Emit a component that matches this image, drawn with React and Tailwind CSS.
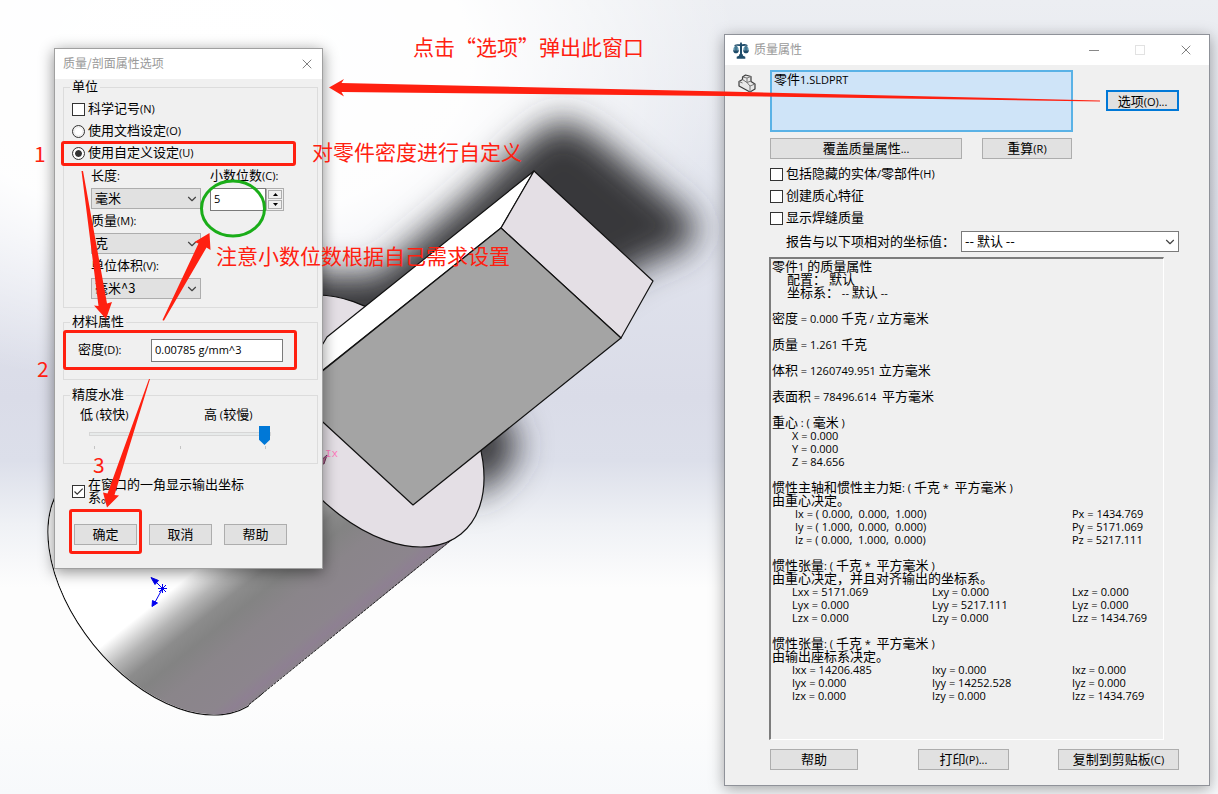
import React, { useState } from "react";
import { ChevronDown, X } from "lucide-react";

// Latin runs are set smaller than the Chinese text around them
function T({ children }) {
  const parts = children.split(/([\x20-\x7e]+)/).filter((part) => part !== "");
  return parts.map((part, i) =>
    /^[\x20-\x7e]+$/.test(part) ? (
      <span
        key={i}
        className="whitespace-pre font-['Open_Sans','Noto_Sans',sans-serif] text-[11px] leading-[0]"
      >
        {part}
      </span>
    ) : (
      <React.Fragment key={i}>{part}</React.Fragment>
    )
  );
}

function Button({ className, children }) {
  return (
    <button
      type="button"
      className={`h-[21px] pb-[2px] leading-[17px] text-center ${className}`}
    >
      <T>{children}</T>
    </button>
  );
}

function Checkbox({ label, defaultChecked = false, className = "h-[22px]" }) {
  const [checked, setChecked] = useState(defaultChecked);
  return (
    <label className={`flex items-center gap-[3px] ${className}`}>
      <span className="relative size-[13px] shrink-0">
        <input
          type="checkbox"
          checked={checked}
          onChange={(e) => setChecked(e.target.checked)}
          className="block size-[13px] appearance-none border border-[#333] bg-white"
        />
        {checked && (
          <svg
            viewBox="0 0 13 13"
            className="pointer-events-none absolute inset-0"
            fill="none"
            stroke="#333"
            strokeWidth="1.2"
          >
            <path d="M2.5 6.5 5.2 9.2 10.7 3.7" />
          </svg>
        )}
      </span>
      <span className="pb-[2px]">
        <T>{label}</T>
      </span>
    </label>
  );
}

function Radio({ label, value, selected, onSelect }) {
  return (
    <label className="flex h-[22px] items-center gap-[3px]">
      <input
        type="radio"
        name="units"
        value={value}
        checked={selected === value}
        onChange={() => onSelect(value)}
        className="size-[13px] shrink-0 appearance-none rounded-full border border-[#333] bg-white bg-clip-content p-[2px] checked:bg-[#333] checked:shadow-[inset_0_0_0_2px_#fff]"
      />
      <span className="pb-[2px]">
        <T>{label}</T>
      </span>
    </label>
  );
}

function Select({ id, options, className }) {
  return (
    <div className={`relative h-[21px] ${className}`}>
      <select
        id={id}
        className="block size-full appearance-none pr-5 pb-[2px] pl-[3px] leading-[17px]"
      >
        {options.map((option) => (
          <option key={option}>{option}</option>
        ))}
      </select>
      <ChevronDown
        size={14}
        strokeWidth={2}
        className="pointer-events-none absolute top-[3px] right-px text-[#444]"
      />
    </div>
  );
}

function Group({ title, className, children }) {
  return (
    <fieldset className={`min-w-0 border border-[#dcdcdc] px-2 ${className}`}>
      <legend className="-ml-[2px] h-[14px] px-[2px] leading-[12px]">
        {title}
      </legend>
      {children}
    </fieldset>
  );
}

function ScaleIcon() {
  return (
    <svg width="16" height="17" viewBox="0 0 16 17" fill="#1f4c69">
      <path d="M7 1.200 8 0l1 1.200V13h-2z" />
      <path d="M1.500 3C4 1.400 6 2.600 8 2.300S12 1.400 14.500 3v1.300C12 3.300 10 4.400 8 4.200S4 3.300 1.500 4.300z" />
      <path
        d="M.3 8.300C.3 5.500 1.400 4 3 4s2.700 1.500 2.700 4.300z M10.300 8.300C10.300 5.500 11.400 4 13 4s2.700 1.500 2.700 4.300z"
        fill="#5d93ab"
      />
      <path d="M2.600 4h.8v5h-.8z M12.600 4h.8v5h-.8z" />
      <path d="M0 8.200h6C5.600 10.700 4.400 11.200 3 11.200S.4 10.700 0 8.200z M10 8.200h6c-.4 2.500-1.600 3-3 3s-2.600-.5-3-3z" />
      <path d="M6.500 12h3l.6 1.800 2.200.9v2H3.700v-2l2.200-.9z" />
    </svg>
  );
}

function PartIcon() {
  return (
    <svg
      width="18"
      height="19"
      viewBox="0 0 18 19"
      fill="#e8e8e8"
      stroke="#3c3c3c"
      strokeWidth="1.200"
      strokeLinejoin="round"
    >
      <path d="M1 7.500 4.500 5.500V3L7.500 1 13 2.500V7.500L17 10V15L12 18 1 12z" />
      <path
        d="M4.500 5.500 9 8.500V4L4.500 3M9 4l4-1.500M9 8.500l4-1.500M9 8.500 12 12l5-2M12 12v6M1 7.500 4.500 9"
        fill="none"
        stroke="#777"
        strokeWidth="1"
      />
    </svg>
  );
}

function Scene() {
  return (
    <svg
      width="1218"
      height="794"
      viewBox="0 0 1218 794"
      className="absolute top-0 left-0"
      aria-hidden="true"
    >
      <defs>
        <linearGradient id="sky" x1="0" y1="0" x2="0" y2="1">
          <stop offset="0" stopColor="#eceef2" />
          <stop offset="0.25" stopColor="#e2e5ee" />
          <stop offset="0.5" stopColor="#dadce8" />
          <stop offset="0.58" stopColor="#dcdfea" />
          <stop offset="0.66" stopColor="#eff1f5" />
          <stop offset="0.74" stopColor="#fdfdfd" />
          <stop offset="0.88" stopColor="#fdfdfd" />
          <stop offset="1" stopColor="#f7f9fb" />
        </linearGradient>
        <radialGradient
          id="glow"
          gradientUnits="userSpaceOnUse"
          cx="0"
          cy="0"
          r="1"
          gradientTransform="translate(200 60) scale(540 330)"
        >
          <stop offset="0" stopColor="#fff" />
          <stop offset="0.5" stopColor="#fff" stopOpacity="0.95" />
          <stop offset="1" stopColor="#fff" stopOpacity="0" />
        </radialGradient>
        <linearGradient
          id="shaft"
          gradientUnits="userSpaceOnUse"
          x1="350"
          y1="431"
          x2="444"
          y2="548"
        >
          <stop offset="0" stopColor="#fff" />
          <stop offset="0.08" stopColor="#fff" />
          <stop offset="0.24" stopColor="#b4b4b4" />
          <stop offset="0.36" stopColor="#8c8c8c" />
          <stop offset="0.47" stopColor="#838383" />
          <stop offset="0.63" stopColor="#8a858a" />
          <stop offset="0.88" stopColor="#8c858d" />
          <stop offset="0.95" stopColor="#8e8092" />
          <stop offset="1" stopColor="#8b838c" />
        </linearGradient>
        <filter id="soft" x="-20%" y="-20%" width="140%" height="140%">
          <feGaussianBlur stdDeviation="17" />
        </filter>
        <clipPath id="aboveEdge">
          <path d="M0 300H748L249 705 240 794H0z" />
        </clipPath>
      </defs>

      <rect width="1218" height="794" fill="url(#sky)" />
      <rect width="1218" height="794" fill="url(#glow)" />

      <g fill="#37383a" filter="url(#soft)">
        <path d="M280 272 375 276 465 200 528 140 560 118 592 134 698 222 690 246 640 266 440 400 300 400z" />
        <path d="M440 400 500 412 518 440 510 468 470 500z" />
      </g>

      {/* cylinder */}
      <g clipPath="url(#aboveEdge)">
        <ellipse
          cx="162.500"
          cy="589"
          rx="145.400"
          ry="88.600"
          transform="rotate(51 162.500 589)"
          fill="#fff"
          stroke="#111"
          strokeWidth="1.200"
        />
        <clipPath id="cap">
          <ellipse
            cx="162.500"
            cy="589"
            rx="144.800"
            ry="88"
            transform="rotate(51 162.500 589)"
          />
        </clipPath>
        <rect
          y="440"
          width="340"
          height="290"
          fill="url(#shaft)"
          clipPath="url(#cap)"
        />
      </g>
      <path d="M77 473 284 305 456 537 249 704z" fill="url(#shaft)" />
      <path
        d="M249 704.500 460 533"
        stroke="#222"
        strokeWidth="1"
        strokeDasharray="3 1"
      />
      <ellipse
        cx="369.500"
        cy="421"
        rx="145.400"
        ry="88.600"
        transform="rotate(51 369.500 421)"
        fill="#e4dfe5"
        stroke="#111"
        strokeWidth="1.200"
      />

      {/* block */}
      <g stroke="#111" strokeWidth="1.200" strokeLinejoin="round">
        <path d="M534 171 327 337 318 352V374L501 228z" fill="#fff" />
        <path d="M534 171 653 281 621 338 501 228z" fill="#e4dfe5" />
        <path d="M501 228 621 338 413 505 300 401V389z" fill="#a4a4a4" />
      </g>

      <path d="M318 463 327 455 324 464z" fill="#b06a90" stroke="#733b5b" />
      <text
        x="325"
        y="457"
        fill="#ff7bbd"
        className="font-['Liberation_Mono',monospace] text-[11px]"
      >
        Ix
      </text>

      {/* origin triad */}
      <g stroke="#0000f0" fill="#0000f0" strokeWidth="1">
        <path d="M162.500 588.500 153 579M162.500 588.500 154 604" />
        <path d="M158 588.500h9M162.500 584v9M159 585l7 7M159 592l7-7" />
        <path d="M151 577.500 158.500 580.500 155 584.500z M152 606.500 152.500 600.500 157.500 603z" />
      </g>
    </svg>
  );
}

function OptionsWindow() {
  const [units, setUnits] = useState("custom");
  const select = "border border-[#adadad] bg-[#e1e1e1]";

  return (
    <section className="absolute top-12 left-[54px] w-[269px] border border-[#a0a0a0] bg-[#f0f0f0] shadow-[0_3px_14px_rgba(0,0,0,0.45)]">
      <header className="flex h-[30px] items-center justify-between bg-white pr-[7px] pl-2 text-xs text-[#999]">
        <h2 className="pb-[2px]">质量/剖面属性选项</h2>
        <button type="button" aria-label="关闭" className="text-[#808080]">
          <X size={16} strokeWidth={1.5} />
        </button>
      </header>

      <form className="px-[8px] pt-px pb-[23px]">
        <Group title="单位" className="mr-[-4px] pt-1 pb-2">
          <Checkbox label="科学记号(N)" />
          <Radio
            label="使用文档设定(O)"
            value="doc"
            selected={units}
            onSelect={setUnits}
          />
          <Radio
            label="使用自定义设定(U)"
            value="custom"
            selected={units}
            onSelect={setUnits}
          />
          <div className="mt-[2px] ml-[19px] flex items-start gap-[9px]">
            <div className="flex w-[110px] flex-col gap-[2px]">
              <label htmlFor="length" className="h-5 leading-[17px]">
                <T>长度:</T>
              </label>
              <Select id="length" options={["毫米", "厘米", "米"]} className={select} />
              <label htmlFor="mass" className="h-5 leading-[17px]">
                <T>质量(M):</T>
              </label>
              <Select id="mass" options={["克", "千克"]} className={select} />
              <label htmlFor="volume" className="h-5 leading-[17px]">
                <T>单位体积(V):</T>
              </label>
              <Select id="volume" options={["毫米^3", "厘米^3"]} className={select} />
            </div>
            <div className="flex flex-col gap-[2px]">
              <label htmlFor="decimals" className="h-5 leading-[17px]">
                <T>小数位数(C):</T>
              </label>
              <div className="flex h-[23px] w-[74px]">
                <input
                  id="decimals"
                  type="text"
                  defaultValue="5"
                  className="w-0 grow border border-[#7a7a7a] bg-white pb-[2px] pl-[3px] font-['Open_Sans',sans-serif] text-[11px]"
                />
                <div className="flex w-[18px] flex-col gap-px border border-[#adadad] p-px">
                  <button
                    type="button"
                    aria-label="增加"
                    className="flex grow items-center justify-center border border-[#adadad]"
                  >
                    <svg width="5" height="3" viewBox="0 0 5 3">
                      <path d="M0 3 2.500 0 5 3z" />
                    </svg>
                  </button>
                  <button
                    type="button"
                    aria-label="减少"
                    className="flex grow items-center justify-center border border-[#adadad]"
                  >
                    <svg width="5" height="3" viewBox="0 0 5 3">
                      <path d="M0 0H5L2.500 3z" />
                    </svg>
                  </button>
                </div>
              </div>
            </div>
          </div>
        </Group>

        <Group title="材料属性" className="mt-[7px] mr-[-4px] pt-[10px] pb-[17px]">
          <div className="ml-[6px] flex h-[23px] items-center">
            <label htmlFor="density" className="w-[73px] pb-1">
              <T>密度(D):</T>
            </label>
            <input
              id="density"
              type="text"
              defaultValue="0.00785 g/mm^3"
              className="h-full w-[132px] border border-[#7a7a7a] bg-white pb-[2px] pl-[3px] font-['Open_Sans',sans-serif] text-[11px]"
            />
          </div>
        </Group>

        <Group title="精度水准" className="mt-2 mr-[-4px] pt-[3px] pb-[14px]">
          <div className="flex h-5 items-center pb-[2px] pl-2">
            <label htmlFor="accuracy" className="w-[124px]">
              <T>低 (较快)</T>
            </label>
            <span>
              <T>高 (较慢)</T>
            </span>
          </div>
          <input
            id="accuracy"
            type="range"
            min="0"
            max="2"
            defaultValue="2"
            className="mt-px ml-[17px] block h-4 w-[182px] appearance-none bg-transparent [&::-webkit-slider-runnable-track]:h-1 [&::-webkit-slider-runnable-track]:border [&::-webkit-slider-runnable-track]:border-[#d6d6d6] [&::-webkit-slider-runnable-track]:bg-[#e7eaea] [&::-webkit-slider-thumb]:-mt-[7px] [&::-webkit-slider-thumb]:h-[19px] [&::-webkit-slider-thumb]:w-[11px] [&::-webkit-slider-thumb]:appearance-none [&::-webkit-slider-thumb]:bg-[#0078d7] [&::-webkit-slider-thumb]:[clip-path:polygon(0_0,100%_0,100%_72%,50%_100%,0_72%)]"
          />
          <div className="mt-1 ml-[22px] flex w-[172px] justify-between">
            <i className="h-[3px] w-px bg-[#c4c4c4]" />
            <i className="h-[3px] w-px bg-[#c4c4c4]" />
            <i className="h-[3px] w-px bg-[#c4c4c4]" />
          </div>
        </Group>

        <Checkbox
          label="在窗口的一角显示输出坐标系。"
          defaultChecked
          className="mt-[13px] ml-[9px] w-[180px] leading-[13px]"
        />

        <div className="mt-[19px] ml-[11px] flex gap-3">
          <Button className="w-[63px] border border-[#adadad] bg-[#e1e1e1]">确定</Button>
          <Button className="w-[63px] border border-[#adadad] bg-[#e1e1e1]">取消</Button>
          <Button className="w-[63px] border border-[#adadad] bg-[#e1e1e1]">帮助</Button>
        </div>
      </form>
    </section>
  );
}

const principal = [
  ["Ix = ( 0.000,  0.000,  1.000)", "Px = 1434.769"],
  ["Iy = ( 1.000,  0.000,  0.000)", "Py = 5171.069"],
  ["Iz = ( 0.000,  1.000,  0.000)", "Pz = 5217.111"],
];

const inertiaAtCentroid = [
  ["Lxx = 5171.069", "Lxy = 0.000", "Lxz = 0.000"],
  ["Lyx = 0.000", "Lyy = 5217.111", "Lyz = 0.000"],
  ["Lzx = 0.000", "Lzy = 0.000", "Lzz = 1434.769"],
];

const inertiaAtOutput = [
  ["Ixx = 14206.485", "Ixy = 0.000", "Ixz = 0.000"],
  ["Iyx = 0.000", "Iyy = 14252.528", "Iyz = 0.000"],
  ["Izx = 0.000", "Izy = 0.000", "Izz = 1434.769"],
];

function Matrix({ rows }) {
  return (
    <table className="ml-5 w-[370px] table-fixed border-collapse">
      <tbody>
        {rows.map((row) => (
          <tr key={row[0]} className="h-[13px]">
            {row.map((cell, i) => (
              <td
                key={cell}
                colSpan={row.length === 2 && i === 0 ? 2 : 1}
                className={`p-0 whitespace-nowrap ${
                  i === row.length - 1
                    ? "w-[90px]"
                    : row.length === 2
                      ? "w-[280px] pl-[3px]"
                      : "w-[140px]"
                }`}
              >
                <T>{cell}</T>
              </td>
            ))}
          </tr>
        ))}
      </tbody>
    </table>
  );
}

function Report() {
  return (
    <div className="mr-[31px] h-[483px] border border-t-2 border-l-2 border-t-[#7c7c7c] border-r-white border-b-white border-l-[#7c7c7c] pl-px leading-[13px]">
      <p>
        <T>零件1 的质量属性</T>
      </p>
      <p className="pl-[15px]">
        <T>配置： 默认</T>
      </p>
      <p className="pl-[15px]">
        <T>坐标系： -- 默认 --</T>
      </p>
      <p className="mt-[13px]">
        <T>密度 = 0.000 千克 / 立方毫米</T>
      </p>
      <p className="mt-[13px]">
        <T>质量 = 1.261 千克</T>
      </p>
      <p className="mt-[13px]">
        <T>体积 = 1260749.951 立方毫米</T>
      </p>
      <p className="mt-[13px]">
        <T>表面积 = 78496.614  平方毫米</T>
      </p>
      <p className="mt-[13px]">
        <T>重心 : ( 毫米 )</T>
      </p>
      <div className="pl-5">
        <p>
          <T>X = 0.000</T>
        </p>
        <p>
          <T>Y = 0.000</T>
        </p>
        <p>
          <T>Z = 84.656</T>
        </p>
      </div>
      <p className="mt-[13px]">
        <T>惯性主轴和惯性主力矩: ( 千克 *  平方毫米 )</T>
      </p>
      <p>由重心决定。</p>
      <Matrix rows={principal} />
      <p className="mt-[13px]">
        <T>惯性张量: ( 千克 *  平方毫米 )</T>
      </p>
      <p>由重心决定，并且对齐输出的坐标系。</p>
      <Matrix rows={inertiaAtCentroid} />
      <p className="mt-[13px]">
        <T>惯性张量: ( 千克 *  平方毫米 )</T>
      </p>
      <p>由输出座标系决定。</p>
      <Matrix rows={inertiaAtOutput} />
    </div>
  );
}

function MassWindow() {
  return (
    <section className="absolute top-[34px] left-[724px] w-[486px] border border-[#8f9299] bg-[#f0f0f0] shadow-[0_3px_14px_rgba(0,0,0,0.35)]">
      <header className="flex h-[30px] items-center bg-white pr-[15px] pl-2 text-xs text-[#999]">
        <ScaleIcon />
        <h2 className="grow pb-[2px] pl-[5px]">质量属性</h2>
        <div className="flex items-center gap-9">
          <button type="button" aria-label="最小化" className="h-px w-[10px] bg-[#888]" />
          <button
            type="button"
            aria-label="最大化"
            className="size-[10px] border border-[#e2e2e2]"
          />
          <button type="button" aria-label="关闭" className="-ml-[3px] text-[#808080]">
            <X size={16} strokeWidth={1.5} />
          </button>
        </div>
      </header>

      <form className="pt-[5px] pr-[30px] pb-[15px] pl-[13px]">
        <div className="flex items-start">
          <div className="mt-1 w-8">
            <PartIcon />
          </div>
          <div className="h-[62px] w-[303px] border-2 border-[#5ab2e6] bg-[#cfe4f8] pl-[2px] leading-[13px]">
            <T>零件1.SLDPRT</T>
          </div>
          <Button className="mt-5 ml-auto w-[73px] border-2 border-[#0078d7] bg-[#e1e1e1]">
            选项(O)...
          </Button>
        </div>

        <div className="pl-8">
          <div className="mt-[6px] mb-1 flex gap-5">
            <Button className="w-[192px] border border-[#adadad] bg-[#e1e1e1]">覆盖质量属性...</Button>
            <Button className="w-[90px] border border-[#adadad] bg-[#e1e1e1]">重算(R)</Button>
          </div>
          <Checkbox label="包括隐藏的实体/零部件(H)" />
          <Checkbox label="创建质心特征" />
          <Checkbox label="显示焊缝质量" />
          <div className="mt-[2px] flex items-center pl-4">
            <label htmlFor="frame" className="w-[175px] pb-[2px]">
              报告与以下项相对的坐标值：
            </label>
            <Select
              id="frame"
              options={["-- 默认 --"]}
              className="grow border border-[#7a7a7a] bg-white"
            />
          </div>
        </div>

        <div className="mt-[5px] ml-[31px] -mr-4">
          <Report />
        </div>

        <div className="mt-[9px] flex pl-8">
          <Button className="w-[88px] border border-[#adadad] bg-[#e1e1e1]">帮助</Button>
          <Button className="ml-[60px] w-[91px] border border-[#adadad] bg-[#e1e1e1]">打印(P)...</Button>
          <Button className="ml-auto w-[121px] border border-[#adadad] bg-[#e1e1e1]">复制到剪贴板(C)</Button>
        </div>
      </form>
    </section>
  );
}

const notes = [
  { text: "点击“选项”弹出此窗口", place: "left-[413px] top-[34px]" },
  { text: "对零件密度进行自定义", place: "left-[312px] top-[139px]" },
  { text: "注意小数位数根据自己需求设置", place: "left-[216px] top-[243px]" },
  { text: "1", place: "left-[34px] top-[141px]" },
  { text: "2", place: "left-[37px] top-[356px]" },
  { text: "3", place: "left-[93px] top-[452px]" },
];

function Annotations() {
  return (
    <div className="pointer-events-none absolute inset-0">
      <svg
        width="1218"
        height="794"
        viewBox="0 0 1218 794"
        className="absolute top-0 left-0"
        aria-hidden="true"
      >
        <g fill="none" stroke="#ff2010" strokeWidth="3">
          <rect x="62.500" y="142.500" width="232" height="22" rx="1.500" />
          <rect x="64.500" y="331.500" width="231" height="37" rx="1.500" />
          <rect x="70.500" y="510.500" width="70" height="42" rx="1.500" />
        </g>
        <ellipse
          cx="233"
          cy="208.500"
          rx="31.500"
          ry="27.500"
          fill="none"
          stroke="#1aad19"
          strokeWidth="3"
        />
        <g fill="#ff2010">
          <path d="M329 87.500 344 79 341.500 83 724 91.500 1100 100.500V101.500L724 96 341.500 92 344 96.500z" />
          <path d="M81.500 171 83 171 107 303.500 112 302 106 319 94 305.500 98.500 306z" />
          <path d="M163 320.500 162.500 320 198.500 243.500 194.500 242 209.500 233 210.500 250 206.500 247.500 164 320.500z" />
          <path d="M150 379 149 379 107.500 493.500 103 492.500 107 507.500 119 495.500 114.500 495z" />
        </g>
      </svg>
      {notes.map((note) => (
        <p
          key={note.text}
          className={`absolute text-[21px] leading-6 whitespace-nowrap text-[#ff2010] ${note.place}`}
        >
          {note.text}
        </p>
      ))}
    </div>
  );
}

export default function App() {
  return (
    <main className="relative min-h-screen overflow-hidden bg-[#fdfdfd] font-['Noto_Sans_CJK_SC','Open_Sans',sans-serif] text-[13px] leading-4 text-black">
      <Scene />
      <MassWindow />
      <OptionsWindow />
      <Annotations />
    </main>
  );
}
